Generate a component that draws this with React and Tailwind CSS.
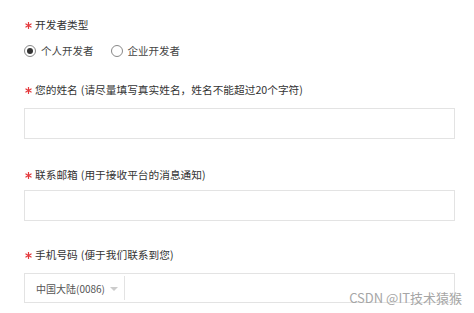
const font = { fontFamily: '"Microsoft YaHei", "Noto Sans CJK SC", sans-serif' };

// red required-field mark
const Star = () => (
  <svg width="7" height="7" viewBox="0 0 14 14" className="shrink-0">
    <g stroke="#e4393c" strokeWidth="2.4" strokeLinecap="round">
      <line x1="7" y1="1" x2="7" y2="13" />
      <line x1="1.8" y1="4" x2="12.2" y2="10" />
      <line x1="1.8" y1="10" x2="12.2" y2="4" />
    </g>
  </svg>
);

const Label = ({ children, note }) => (
  <div className="flex items-center h-[16px] text-[10.7px] text-[#333]">
    <span className="w-[11px] pl-[1px] flex items-center shrink-0">
      <Star />
    </span>
    <span>{children}</span>
    {note && <span className="ml-[3px]">{note}</span>}
  </div>
);

const Radio = ({ checked, children }) => (
  <label className="flex items-center gap-[5px] text-[10.5px] text-[#444]">
    <span className="w-[12px] h-[12px] rounded-full border border-[#888] flex items-center justify-center bg-white">
      {checked && <span className="w-[6px] h-[6px] rounded-full bg-[#333]" />}
    </span>
    {children}
  </label>
);

export default function App() {
  return (
    <div className="w-[474px] h-[313px] bg-white relative overflow-hidden" style={font}>
      <div className="pl-[24px] pr-[19px] pt-[17px]">
        {/* 开发者类型 */}
        <Label>开发者类型</Label>
        <div className="flex items-center gap-[17px] mt-[10px] h-[16px]">
          <Radio checked>个人开发者</Radio>
          <Radio>企业开发者</Radio>
        </div>

        {/* 姓名 */}
        <div className="mt-[23px]">
          <Label note="(请尽量填写真实姓名，姓名不能超过20个字符)">您的姓名</Label>
          <div className="mt-[10px] h-[31px] border border-[#e3e3e3]" />
        </div>

        {/* 邮箱 */}
        <div className="mt-[28px]">
          <Label note="(用于接收平台的消息通知)">联系邮箱</Label>
          <div className="mt-[7px] h-[31px] border border-[#e3e3e3]" />
        </div>

        {/* 手机号码 */}
        <div className="mt-[26px]">
          <Label note="(便于我们联系到您)">手机号码</Label>
          <div className="mt-[10px] h-[30px] border border-[#e3e3e3] flex items-center">
            <div className="flex items-center h-full pl-[11px] text-[10px] text-[#555]">
              <span>中国大陆(0086)</span>
              <span className="ml-[5px] mt-[1px] w-0 h-0 border-l-[4px] border-r-[4px] border-t-[4px] border-l-transparent border-r-transparent border-t-[#ccc]" />
            </div>
            <div className="ml-[6px] w-px h-[24px] bg-[#e3e3e3]" />
          </div>
        </div>
      </div>

      <div className="absolute right-[12px] bottom-[6px] text-[13px] text-[#a6a6a6]">
        CSDN @IT技术猿猴
      </div>
    </div>
  );
}
